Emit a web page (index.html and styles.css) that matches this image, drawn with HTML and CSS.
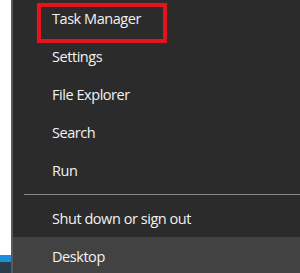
FILE: index.html
```html
<!DOCTYPE html>
<html>
<head>
<meta charset="utf-8">
<link rel="stylesheet" href="styles.css">
</head>
<body>
<div class="screen">
  <div class="desk">
    <div class="desk-fill"></div>
    <div class="taskbar-accent"></div>
    <div class="taskbar"></div>
  </div>
  <div class="menu">
    <div class="item first">Task Manager</div>
    <div class="item">Settings</div>
    <div class="item">File Explorer</div>
    <div class="item">Search</div>
    <div class="item">Run</div>
    <div class="sep"></div>
    <div class="item">Shut down or sign out</div>
    <div class="item hover">Desktop</div>
  </div>
  <div class="highlight"></div>
</div>
</body>
</html>
```
FILE: styles.css
```css
html, body {
  margin: 0;
  padding: 0;
  background: #2b2b2b;
}
.screen {
  position: relative;
  width: 300px;
  height: 273px;
  overflow: hidden;
  display: flex;
  font-family: "Open Sans", "Noto Sans", sans-serif;
}
.desk {
  width: 11px;
  display: flex;
  flex-direction: column;
  flex-shrink: 0;
}
.desk-fill {
  flex: 1;
  background: #ffffff;
}
.taskbar-accent {
  height: 7px;
  background: #1c8fd8;
}
.taskbar {
  height: 11px;
  background: #2a3c4a;
}
.menu {
  flex: 1;
  display: flex;
  flex-direction: column;
  background: #2b2b2b;
  border-left: 2px solid #5a5a5a;
}
.item {
  height: 38px;
  flex-shrink: 0;
  display: flex;
  align-items: center;
  padding-left: 39px;
  color: #f2f2f2;
  font-size: 14.5px;
  letter-spacing: -0.45px;
}
.item.first {
  height: 37px;
}
.item.hover {
  background: #424242;
}
.sep {
  height: 1px;
  flex-shrink: 0;
  margin: 5px 0 4px 11px;
  background: #8c8c8c;
}
.highlight {
  position: absolute;
  left: 37px;
  top: 3px;
  width: 122px;
  height: 32px;
  border: 4px solid #e3141e;
  border-radius: 1px;
  box-shadow: 0 0 1px #e3141e;
}
```
